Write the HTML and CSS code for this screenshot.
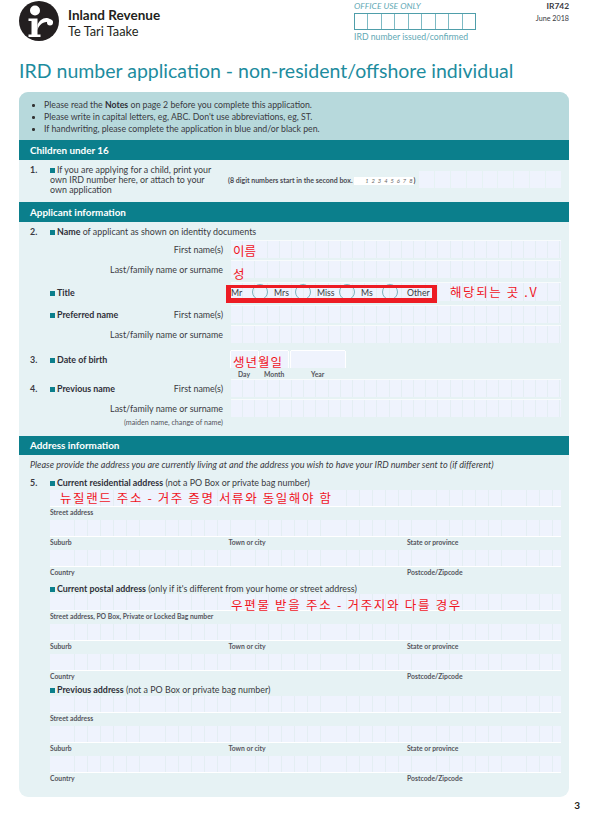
FILE: index.html
```html
<!DOCTYPE html>
<html lang="en">
<head>
    <meta charset="UTF-8">
    <meta name="viewport" content="width=device-width, initial-scale=1.0">
    <title>IR742 IRD number application</title>
    <link rel="stylesheet" href="styles.css">
</head>
<body>
    <div class="page">
        <header class="top">
            <svg class="logo" viewBox="0 0 40 40" role="img" aria-label="Inland Revenue logo">
                <circle cx="20" cy="20" r="20" fill="#231f20"/>
                <circle cx="16" cy="9.5" r="5" fill="#fff"/>
                <path d="M9.5 17.5 H18.5 V33.5 H21.5 V36 H9.5 V33.5 H12.5 V20 H9.5 Z" fill="#fff"/>
                <path d="M18.5 24 C20 19.5 24 16.5 28 17 C31.5 17.5 34 19.5 34 22 C32 20.5 28 20.5 25 21.5 C22 22.5 19.5 25 18.5 29 Z" fill="#fff"/>
                <circle cx="31" cy="21.5" r="3" fill="#fff"/>
            </svg>
            <div class="brand">
                <div class="brand-en">Inland Revenue</div>
                <div class="brand-mi">Te Tari Taake</div>
            </div>
            <div class="office">
                <div class="office-title">OFFICE USE ONLY</div>
                <div class="office-boxes">
                    <span></span><span></span><span></span><span></span><span></span><span></span><span></span><span></span><span></span>
                </div>
                <div class="office-caption">IRD number issued/confirmed</div>
            </div>
            <div class="form-id">
                <div class="form-code">IR742</div>
                <div class="form-date">June 2018</div>
            </div>
        </header>

        <h1>IRD number application - non-resident/offshore individual</h1>

        <main class="card">
            <ul class="notes">
                <li>Please read the <b>Notes</b> on page 2 before you complete this application.</li>
                <li>Please write in capital letters, eg, ABC. Don't use abbreviations, eg, ST.</li>
                <li>If handwriting, please complete the application in blue and/or black pen.</li>
            </ul>

            <h2 class="bar">Children under 16</h2>
            <section class="children">
                <span class="num">1.</span>
                <p class="child-text"><i class="mark"></i>If you are applying for a child, print your<br>own IRD number here, or attach to your<br>own application</p>
                <div class="hint">(8 digit numbers start in the second box.<span class="sample">1 2 3 4 5 6 7 8</span>)</div>
                <div class="ird-boxes">
                    <span></span><span></span><span></span><span></span><span></span><span></span><span></span><span></span><span></span>
                </div>
            </section>

            <h2 class="bar">Applicant information</h2>
            <section class="applicant">
                <div class="row row-head">
                    <span class="num">2.</span>
                    <div class="row-label"><span><i class="mark"></i><b>Name</b> of applicant as shown on identity documents</span></div>
                </div>
                <div class="row">
                    <span class="num"></span>
                    <div class="row-label"><span></span><span>First name(s)</span></div>
                    <div class="strip"><span class="note note-first">이름</span></div>
                </div>
                <div class="row gap-3">
                    <span class="num"></span>
                    <div class="row-label"><span></span><span>Last/family name or surname</span></div>
                    <div class="strip"><span class="note note-last">성</span></div>
                </div>
                <div class="row row-title">
                    <span class="num"></span>
                    <div class="row-label"><span><i class="mark"></i><b>Title</b></span></div>
                    <div class="strip">
                        <div class="title-options">
                            <span class="opt-mr">Mr</span><i class="radio"></i>
                            <span class="opt-mrs">Mrs</span><i class="radio"></i>
                            <span class="opt-miss">Miss</span><i class="radio"></i>
                            <span class="opt-ms">Ms</span><i class="radio"></i>
                            <span class="opt-other">Other</span>
                        </div>
                        <div class="red-box"></div>
                        <span class="note note-title">해당되는 곳 .V</span>
                    </div>
                </div>
                <div class="row gap-5">
                    <span class="num"></span>
                    <div class="row-label"><span><i class="mark"></i><b>Preferred name</b></span><span>First name(s)</span></div>
                    <div class="strip"></div>
                </div>
                <div class="row gap-3">
                    <span class="num"></span>
                    <div class="row-label"><span></span><span>Last/family name or surname</span></div>
                    <div class="strip"></div>
                </div>
                <div class="row gap-8">
                    <span class="num">3.</span>
                    <div class="row-label"><span><i class="mark"></i><b>Date of birth</b></span></div>
                    <div class="dob">
                        <div class="strip dob-part"></div>
                        <div class="strip dob-part"></div>
                        <div class="strip dob-year"></div>
                        <span class="note note-dob">생년월일</span>
                    </div>
                </div>
                <div class="dob-caps">
                    <span class="cap-day">Day</span><span class="cap-month">Month</span><span class="cap-year">Year</span>
                </div>
                <div class="row">
                    <span class="num">4.</span>
                    <div class="row-label"><span><i class="mark"></i><b>Previous name</b></span><span>First name(s)</span></div>
                    <div class="strip"></div>
                </div>
                <div class="row gap-3">
                    <span class="num"></span>
                    <div class="row-label"><span></span><span>Last/family name or surname</span></div>
                    <div class="strip"></div>
                </div>
                <div class="maiden">(maiden name, change of name)</div>
            </section>

            <h2 class="bar bar-address">Address information</h2>
            <section class="address">
                <p class="lead">Please provide the address you are currently living at and the address you wish to have your IRD number sent to (if different)</p>

                <div class="addr-head addr-head-first"><span class="num">5.</span><span><i class="mark"></i><b>Current residential address</b> (not a PO Box or private bag number)</span></div>
                <div class="wide"><span class="note note-nz">뉴질랜드 주소 - 거주 증명 서류와 동일해야 함</span></div>
                <div class="caps"><span>Street address</span></div>
                <div class="wide"></div>
                <div class="caps"><span>Suburb</span><span>Town or city</span><span>State or province</span></div>
                <div class="wide"></div>
                <div class="caps"><span>Country</span><span></span><span>Postcode/Zipcode</span></div>

                <div class="addr-head addr-head-postal"><span class="num"></span><span><i class="mark"></i><b>Current postal address</b> (only if it's different from your home or street address)</span></div>
                <div class="wide"><span class="note note-post">우편물 받을 주소 - 거주지와 다를 경우</span></div>
                <div class="caps"><span>Street address, PO Box, Private or Locked Bag number</span></div>
                <div class="wide"></div>
                <div class="caps"><span>Suburb</span><span>Town or city</span><span>State or province</span></div>
                <div class="wide"></div>
                <div class="caps"><span>Country</span><span></span><span>Postcode/Zipcode</span></div>

                <div class="addr-head addr-head-last"><span class="num"></span><span><i class="mark"></i><b>Previous address</b> (not a PO Box or private bag number)</span></div>
                <div class="wide"></div>
                <div class="caps"><span>Street address</span></div>
                <div class="wide"></div>
                <div class="caps"><span>Suburb</span><span>Town or city</span><span>State or province</span></div>
                <div class="wide"></div>
                <div class="caps"><span>Country</span><span></span><span>Postcode/Zipcode</span></div>
            </section>
        </main>

        <div class="page-no">3</div>
    </div>
</body>
</html>
```

FILE: styles.css
```css
* {
    margin: 0;
    padding: 0;
    box-sizing: border-box;
}
body {
    background: #fff;
    color: #3a3a42;
    font-family: "Lato", "Noto Sans CJK KR", sans-serif;
    font-size: 8.9px;
    line-height: 10px;
}
.page {
    width: 589px;
    height: 817px;
    padding: 0 20px 0 19px;
    overflow: hidden;
}

/* top of the form */
.top {
    display: flex;
    height: 54px;
    padding-top: 1px;
}
.logo {
    width: 40px;
    height: 40px;
    flex: none;
}
.brand {
    width: 295px;
    padding: 7px 0 0 9px;
    color: #231f20;
}
.brand-en {
    font-size: 13.5px;
    font-weight: 700;
    line-height: 15px;
}
.brand-mi {
    font-size: 12.8px;
    line-height: 17px;
}
.office {
    width: 122px;
    color: #5fa9b5;
}
.office-title {
    font-style: italic;
    font-size: 8.5px;
    line-height: 11px;
    margin-bottom: 1px;
}
.office-boxes {
    display: flex;
    height: 17px;
    border: 1px solid #4f9eaa;
}
.office-boxes span {
    flex: 1;
    border-left: 1px solid #7dbac4;
}
.office-boxes span:first-child {
    border-left: none;
}
.office-caption {
    font-size: 8.7px;
    line-height: 14px;
    white-space: nowrap;
}
.form-id {
    flex: 1;
    text-align: right;
}
.form-code {
    font-weight: 700;
    font-size: 8.4px;
    line-height: 11px;
}
.form-date {
    font-size: 7.2px;
    line-height: 14px;
}

h1 {
    color: #1d8c9e;
    font-size: 19.5px;
    font-weight: 400;
    line-height: 26px;
    height: 38px;
    padding-top: 4px;
    white-space: nowrap;
}

/* main card */
.card {
    width: 550px;
    height: 705px;
    background: #e6f2f4;
    border-radius: 9px;
    overflow: hidden;
}
.notes {
    height: 48px;
    padding: 7px 0 0 25px;
    background: #b7d9dc;
    list-style: none;
    font-size: 8.76px;
    line-height: 12px;
}
.notes li {
    position: relative;
}
.notes li::before {
    content: "";
    position: absolute;
    left: -12px;
    top: 5px;
    width: 2.5px;
    height: 2.5px;
    border-radius: 50%;
    background: #333;
}
.bar {
    height: 20px;
    padding-left: 11px;
    background: #0b7f8c;
    color: #fff;
    font-size: 9.9px;
    font-weight: 700;
    line-height: 20px;
}
.bar-address {
    height: 19px;
    line-height: 19px;
}
.num {
    flex: none;
    width: 20px;
    font-weight: 700;
}
.mark {
    display: inline-block;
    width: 5px;
    height: 5px;
    margin-right: 2px;
    background: #0b7f8c;
}
b {
    font-weight: 700;
    color: #2f2f38;
}

/* section 1 */
.children {
    display: flex;
    height: 42px;
    padding: 5px 8px 0 11px;
}
.child-text {
    width: 178px;
    flex: none;
}
.hint {
    width: 191px;
    flex: none;
    padding-top: 10px;
    font-size: 7px;
    font-weight: 700;
    white-space: nowrap;
    color: #4a4a52;
}
.sample {
    display: inline-block;
    width: 60px;
    margin-left: 1px;
    background: #fff;
    text-align: right;
    padding-right: 1px;
    font-style: italic;
    font-weight: 400;
    word-spacing: 1.6px;
    font-size: 5.8px;
    line-height: 8px;
    color: #666;
}
.ird-boxes {
    display: flex;
    gap: 1px;
    width: 142px;
    height: 17px;
    margin-top: 6px;
}
.ird-boxes span {
    flex: 1;
    background: #eff3fd;
}

/* applicant rows */
.applicant {
    height: 214px;
    padding: 0 8px 0 11px;
}
.row {
    display: flex;
    align-items: center;
    height: 17px;
}
.row-head {
    height: 19px;
}
.gap-3 {
    margin-top: 3px;
}
.gap-5 {
    margin-top: 5px;
}
.gap-8 {
    margin-top: 8px;
}
.row-title {
    height: 18px;
    margin-top: 5px;
}
.row-label {
    flex: none;
    display: flex;
    justify-content: space-between;
    width: 173px;
    padding-top: 1px;
    white-space: nowrap;
}
.strip {
    position: relative;
    flex: none;
    width: 330px;
    height: 100%;
    margin-left: 8px;
    background: repeating-linear-gradient(90deg, #eff3fd 0 11.2px, #e4eef3 11.2px 12.2px);
    box-shadow: 0 -1px 0 #f8fbfc;
}
.note {
    position: absolute;
    color: #f0141e;
    font-family: "Noto Sans CJK KR", sans-serif;
    font-size: 12.5px;
    font-weight: 400;
    line-height: 16px;
    white-space: nowrap;
    z-index: 3;
}
.note-first {
    left: 2px;
    top: 2px;
}
.note-last {
    left: 2px;
    top: 5px;
}
.note-title {
    left: 219px;
    top: 1px;
    letter-spacing: 1.6px;
}
.note-dob {
    left: 2px;
    top: 3px;
    letter-spacing: 1px;
}
.note-nz {
    left: 10px;
    top: 0;
    letter-spacing: 1.6px;
}
.note-post {
    left: 181px;
    top: 3px;
    letter-spacing: 1.7px;
}

/* title options with the red box over them */
.title-options {
    display: flex;
    align-items: center;
    height: 100%;
    padding-top: 2px;
    font-size: 8.7px;
}
.opt-mr {
    flex: none;
    width: 21px;
}
.opt-mrs {
    flex: none;
    width: 27px;
    padding-left: 6px;
}
.opt-miss {
    flex: none;
    width: 28px;
    padding-left: 6px;
}
.opt-ms {
    flex: none;
    width: 27px;
    padding-left: 6px;
}
.opt-other {
    flex: none;
    padding-left: 9px;
}
.radio {
    flex: none;
    width: 16px;
    height: 16px;
    margin-top: -3px;
    border: 1px solid #7fb3bf;
    border-radius: 50%;
}
.red-box {
    position: absolute;
    left: -5px;
    top: 2px;
    width: 211px;
    height: 18px;
    border: solid #ed1c24;
    border-width: 3px 5px 5px;
}

/* date of birth */
.dob {
    position: relative;
    display: flex;
    gap: 3px;
    height: 100%;
    margin-left: 8px;
}
.dob .strip {
    margin-left: 0;
    background: #eff3fd;
    box-shadow: 0 -1px 0 #fff, 1px 0 0 #fff, -1px 0 0 #fff;
}
.dob-part {
    width: 27px;
}
.dob-year {
    width: 54px;
}
.dob-caps {
    display: flex;
    height: 12px;
    padding: 1px 0 0 208px;
    font-size: 6.8px;
    line-height: 10px;
    font-weight: 700;
    color: #55555d;
}
.cap-day {
    width: 26px;
}
.cap-month {
    width: 47px;
}
.maiden {
    width: 193px;
    padding-top: 1px;
    text-align: right;
    font-size: 7.2px;
    color: #55555d;
    line-height: 10px;
    white-space: nowrap;
}

/* address rows */
.address {
    padding: 0 8px 0 11px;
}
.lead {
    height: 20px;
    font-style: italic;
    font-size: 9.1px;
    line-height: 20px;
    white-space: nowrap;
}
.addr-head {
    display: flex;
    align-items: center;
    height: 14px;
}
.addr-head-first {
    height: 15px;
}
.addr-head-postal {
    padding-top: 3px;
}
.addr-head-last {
    height: 12px;
}
.wide {
    position: relative;
    height: 17px;
    margin-left: 20px;
    border-bottom: 1px solid #fff;
    background: repeating-linear-gradient(90deg, #eff3fd 0 24.4px, #e4eef3 24.4px 25.4px, #eff3fd 25.4px 37.4px, #e4eef3 37.4px 38.4px, #eff3fd 38.4px 50.4px, #e4eef3 50.4px 51.4px, #eff3fd 51.4px 63.4px, #e4eef3 63.4px 64.4px, #eff3fd 64.4px 76.4px, #e4eef3 76.4px 77.4px, #eff3fd 77.4px 89.4px, #e4eef3 89.4px 90.4px);
}
.caps {
    display: flex;
    height: 13px;
    margin-left: 20px;
    font-size: 6.8px;
    font-weight: 700;
    line-height: 11px;
    color: #55555d;
}
.caps span {
    flex: none;
    width: 178.5px;
    white-space: nowrap;
}
.page-no {
    padding-top: 3px;
    text-align: right;
    font-weight: 700;
    font-size: 10px;
    color: #231f20;
    margin-right: -11px;
}
```
